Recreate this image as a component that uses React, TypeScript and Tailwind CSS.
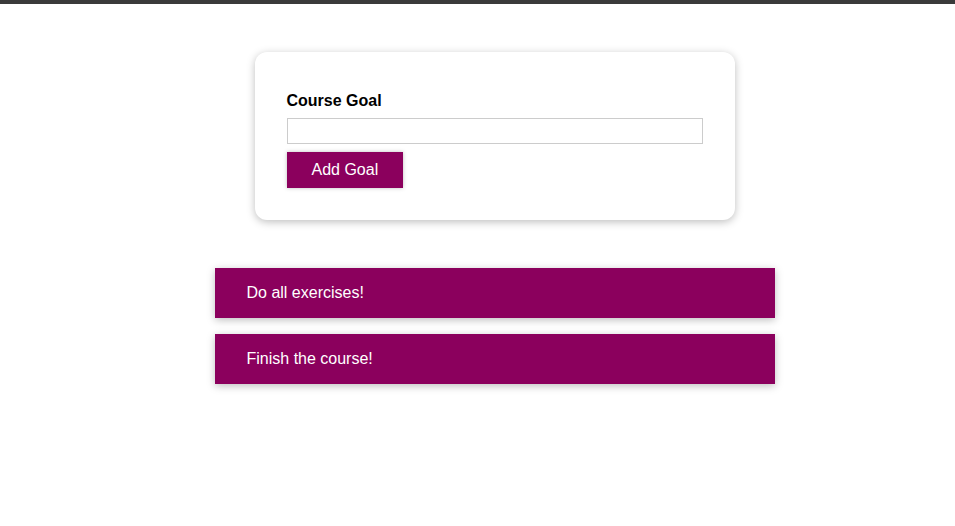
import { useState } from "react";

const initialGoals = [
  { id: "g1", text: "Do all exercises!" },
  { id: "g2", text: "Finish the course!" },
];

export default function App() {
  const [goals, setGoals] = useState(initialGoals);
  const [entered, setEntered] = useState("");

  const addGoal = (e: React.FormEvent) => {
    e.preventDefault();
    if (entered.trim().length === 0) return;
    setGoals((prev) => [{ id: Math.random().toString(), text: entered }, ...prev]);
    setEntered("");
  };

  return (
    <div className="min-h-screen bg-white font-['Liberation_Sans',Arial,sans-serif] text-base leading-[18px] text-black">
      <div className="h-[4px] bg-[#3a3a3a]" />

      <div className="pl-[34px]">
        {/* form card */}
        <section className="mx-auto mt-[48px] w-[480px] max-w-[90%] rounded-[12px] bg-white p-8 shadow-[0_2px_8px_rgba(0,0,0,0.26)]">
          <form onSubmit={addGoal}>
            <div className="my-2">
              <label className="mb-2 block font-bold">Course Goal</label>
              <input
                type="text"
                value={entered}
                onChange={(e) => setEntered(e.target.value)}
                className="block w-full border border-[#ccc] px-1 leading-6 outline-none"
              />
            </div>
            <button
              type="submit"
              className="cursor-pointer border border-[#8b005d] bg-[#8b005d] px-6 py-2 text-white shadow-[0_0_4px_rgba(0,0,0,0.26)]"
            >
              Add Goal
            </button>
          </form>
        </section>

        {/* goal list */}
        <section className="mx-auto mt-[48px] w-[560px] max-w-[90%]">
          <ul className="flex flex-col gap-4">
            {goals.map((goal) => (
              <li
                key={goal.id}
                onClick={() => setGoals((prev) => prev.filter((g) => g.id !== goal.id))}
                className="cursor-pointer bg-[#8b005d] px-8 py-4 text-white shadow-[0_2px_8px_rgba(0,0,0,0.26)]"
              >
                {goal.text}
              </li>
            ))}
          </ul>
        </section>
      </div>
    </div>
  );
}
